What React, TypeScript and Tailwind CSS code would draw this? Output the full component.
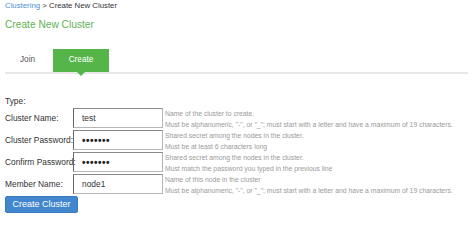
const rows = [
  {
    label: 'Cluster Name:',
    value: 'test',
    type: 'text',
    help: ['Name of the cluster to create.', 'Must be alphanumeric, "-", or "_"; must start with a letter and have a maximum of 19 characters.']
  },
  {
    label: 'Cluster Password:',
    value: 'secret1',
    type: 'password',
    help: ['Shared secret among the nodes in the cluster.', 'Must be at least 6 characters long']
  },
  {
    label: 'Confirm Password:',
    value: 'secret1',
    type: 'password',
    help: ['Shared secret among the nodes in the cluster.', 'Must match the password you typed in the previous line']
  },
  {
    label: 'Member Name:',
    value: 'node1',
    type: 'text',
    help: ['Name of this node in the cluster', 'Must be alphanumeric, "-", or "_"; must start with a letter and have a maximum of 19 characters.']
  }
]

const FieldRow = ({ label, value, type, help }: (typeof rows)[number]) => {
  return (
    <div className="flex items-start h-[22px]">
      <div className="w-[68px] h-[20px] flex items-center text-[8.4px] text-[#333] whitespace-nowrap">{label}</div>
      <input
        readOnly
        type={type}
        value={value}
        className={
          type === 'password'
            ? 'w-[90px] h-[20px] border border-[#b5b5b5] border-l-[#666] border-t-[#888] px-[8px] text-[10px] font-bold tracking-[0.5px] text-[#222] outline-none'
            : 'w-[90px] h-[20px] border border-[#b5b5b5] border-l-[#666] border-t-[#888] px-[8px] text-[8.4px] text-[#333] outline-none'
        }
      />
      <div className="ml-[2px] text-[6.8px] leading-[11px] text-[#9a9a9a] whitespace-nowrap">
        <div>{help[0]}</div>
        <div>{help[1]}</div>
      </div>
    </div>
  )
}

export default function App() {
  return (
    <div className="w-[474px] h-[225px] bg-white px-[5px] font-['Liberation_Sans',Arial,sans-serif] overflow-hidden">
      <div className="pt-[1px] text-[7.8px] leading-[10px] text-[#333]">
        <span className="text-[#4d90d6]">Clustering</span> &gt; Create New Cluster
      </div>
      <h1 className="mt-[7px] text-[10.2px] leading-[14px] text-[#5fb455]">Create New Cluster</h1>

      <div className="mt-[17px] relative">
        <div className="flex h-[23px]">
          <div className="w-[45px] flex items-center justify-center text-[8.2px] text-[#555]">Join</div>
          <div className="ml-[3px] w-[56px] relative flex items-center justify-center bg-[#55b548] text-[8.2px] text-white">
            Create
            <span className="absolute left-1/2 -translate-x-1/2 top-full w-0 h-0 border-l-[4px] border-r-[4px] border-t-[4px] border-l-transparent border-r-transparent border-t-[#55b548]" />
          </div>
        </div>
        <div className="h-[2px] bg-[#e8e8e8] mr-[1px]" />
      </div>

      <div className="mt-[22px] text-[8.4px] leading-[10px] text-[#333]">Type:</div>

      <div className="mt-[2px]">
        {rows.map((row) => (
          <FieldRow key={row.label} {...row} />
        ))}
      </div>

      <button className="block h-[17px] w-[73px] rounded-[2px] bg-[#4287cd] border border-[#3a7bbf] text-white text-[9px] leading-none">
        Create Cluster
      </button>
    </div>
  )
}
